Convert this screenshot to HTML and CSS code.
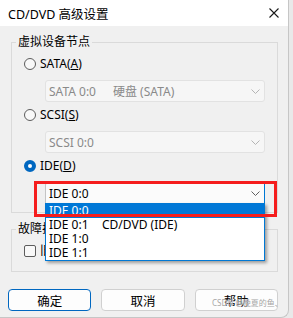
FILE: index.html
```html
<!DOCTYPE html>
<html lang="zh-CN">
<head>
  <meta charset="UTF-8">
  <title>CD/DVD 高级设置</title>
  <link rel="stylesheet" href="styles.css">
</head>
<body>
  <div class="window">
    <div class="titlebar">
      <span class="title">CD/DVD 高级设置</span>
      <svg class="close" width="10" height="10" viewBox="0 0 10 10">
        <path d="M0.5 0.5 L9.5 9.5 M9.5 0.5 L0.5 9.5" stroke="#1a1a1a" stroke-width="1.1" fill="none"/>
      </svg>
    </div>

    <div class="content">
      <!-- Virtual device node -->
      <fieldset class="group">
        <legend>虚拟设备节点</legend>

        <div class="option"><span class="radio"></span><span>SATA(<u>A</u>)</span></div>
        <div class="combo disabled">
          <span><span class="col" style="width: 64px">SATA 0:0</span>硬盘 (SATA)</span>
          <svg class="chevron" width="9" height="5" viewBox="0 0 9 5"><path d="M0.5 0.5 L4.5 4.5 L8.5 0.5" stroke="#b4b4b4" fill="none"/></svg>
        </div>

        <div class="option"><span class="radio"></span><span>SCSI(<u>S</u>)</span></div>
        <div class="combo disabled">
          <span>SCSI 0:0</span>
          <svg class="chevron" width="9" height="5" viewBox="0 0 9 5"><path d="M0.5 0.5 L4.5 4.5 L8.5 0.5" stroke="#b4b4b4" fill="none"/></svg>
        </div>

        <div class="option"><span class="radio checked"></span><span>IDE(<u>D</u>)</span></div>
        <div class="combo active last">
          <span>IDE 0:0</span>
          <svg class="chevron" width="9" height="5" viewBox="0 0 9 5"><path d="M0.5 0.5 L4.5 4.5 L8.5 0.5" stroke="#606060" fill="none"/></svg>

          <!-- open dropdown list -->
          <ul class="droplist">
            <li class="selected">IDE 0:0</li>
            <li><span class="col" style="width: 53px">IDE 0:1</span>CD/DVD (IDE)</li>
            <li>IDE 1:0</li>
            <li>IDE 1:1</li>
          </ul>
          <div class="mark"></div>
        </div>
      </fieldset>

      <!-- Troubleshooting -->
      <fieldset class="group trouble">
        <legend>故障排除</legend>
        <div class="option"><span class="checkbox"></span><span>旧版模拟(<u>L</u>)</span></div>
      </fieldset>

      <div class="buttons">
        <button class="btn default">确定</button>
        <button class="btn">取消</button>
        <button class="btn">帮助</button>
      </div>
    </div>

    <span class="watermark">CSDN @晚夏的鱼、</span>
  </div>
</body>
</html>
```

FILE: styles.css
```css
/* Page */
body {
  margin: 0;
  background: #e9e9e9;
  font-family: "Noto Sans", "Noto Sans CJK SC", sans-serif;
  font-size: 12px;
  color: #000;
}

/* Dialog window */
.window {
  position: relative;
  width: 288px;
  height: 317px;
  background: #f0f0f0;
  border-right: 1px solid #c6c6c6;
  border-bottom: 1px solid #c6c6c6;
  border-bottom-right-radius: 8px;
  overflow: hidden;
}

.titlebar {
  display: flex;
  justify-content: space-between;
  align-items: center;
  height: 26px;
  padding: 0 9px 0 8px;
  background: #fff;
}

.title {
  font-size: 12.5px;
}

.close {
  margin-top: -1px;
}

.content {
  padding: 8px 10px 0 11px;
}

/* Group boxes */
.group {
  margin: 0;
  padding: 6px 12px 8px 12px;
  border: 1px solid #dadada;
}

.group legend {
  margin-left: -8px;
  padding: 0 2px;
  line-height: 16px;
}

.trouble {
  margin-top: 8px;
  padding-bottom: 12px;
}

/* Radio and checkbox rows */
.option {
  display: flex;
  align-items: center;
  gap: 4px;
  height: 16px;
  line-height: 16px;
}

.radio {
  box-sizing: border-box;
  width: 12px;
  height: 12px;
  border: 1px solid #5c5c5c;
  border-radius: 50%;
  background: #f8f8f8;
}

.radio.checked {
  border: 4px solid #0067c0;
  background: #fff;
}

.checkbox {
  box-sizing: border-box;
  width: 12px;
  height: 12px;
  border: 1px solid #5c5c5c;
  border-radius: 2px;
  background: #f8f8f8;
}

/* Combo boxes */
.combo {
  position: relative;
  box-sizing: border-box;
  display: flex;
  justify-content: space-between;
  align-items: center;
  width: 220px;
  height: 22px;
  margin: 8px 0 5px 21px;
  padding: 0 4px 0 3px;
  border: 1px solid #e2e2e2;
  border-radius: 3px;
  background: #f6f6f6;
  white-space: nowrap;
}

.combo.disabled {
  color: #8a8a8a;
}

.combo.active {
  border-color: #c4c4c4;
  border-right-color: #0078d4;
  border-radius: 3px 0 0 0;
  background: #fbfbfb;
}

.combo.last {
  margin-bottom: 0;
}

.col {
  display: inline-block;
}

.droplist {
  position: absolute;
  top: 20px;
  left: -1px;
  width: 220px;
  margin: 0;
  padding: 0;
  list-style: none;
  box-sizing: border-box;
  background: #fff;
  border: 1px solid #0078d4;
  box-shadow: 2px 2px 3px rgba(0, 0, 0, 0.35);
  z-index: 2;
}

.droplist li {
  height: 14px;
  line-height: 14px;
  padding-left: 3px;
}

.droplist li.selected {
  background: #0078d7;
  color: #fff;
}

/* Red highlight frame over the IDE combo */
.mark {
  position: absolute;
  top: -2px;
  left: -12px;
  width: 243px;
  height: 36px;
  box-sizing: border-box;
  border: 3px solid #f51d1d;
  z-index: 3;
}

/* Bottom buttons */
.buttons {
  display: flex;
  gap: 10px;
  margin: 17px 0 0 -3px;
}

.btn {
  width: 84px;
  height: 22px;
  padding: 0;
  font-family: inherit;
  font-size: 12.5px;
  color: #000;
  background: #fdfdfd;
  border: 1px solid #d0d0d0;
  border-radius: 4px;
}

.btn.default {
  border-color: #0067c0;
}

.watermark {
  position: absolute;
  left: 212px;
  top: 298px;
  font-size: 8px;
  line-height: 10px;
  white-space: nowrap;
  color: #a6a6a6;
  text-shadow: 0 0 1px #fff;
}
```
